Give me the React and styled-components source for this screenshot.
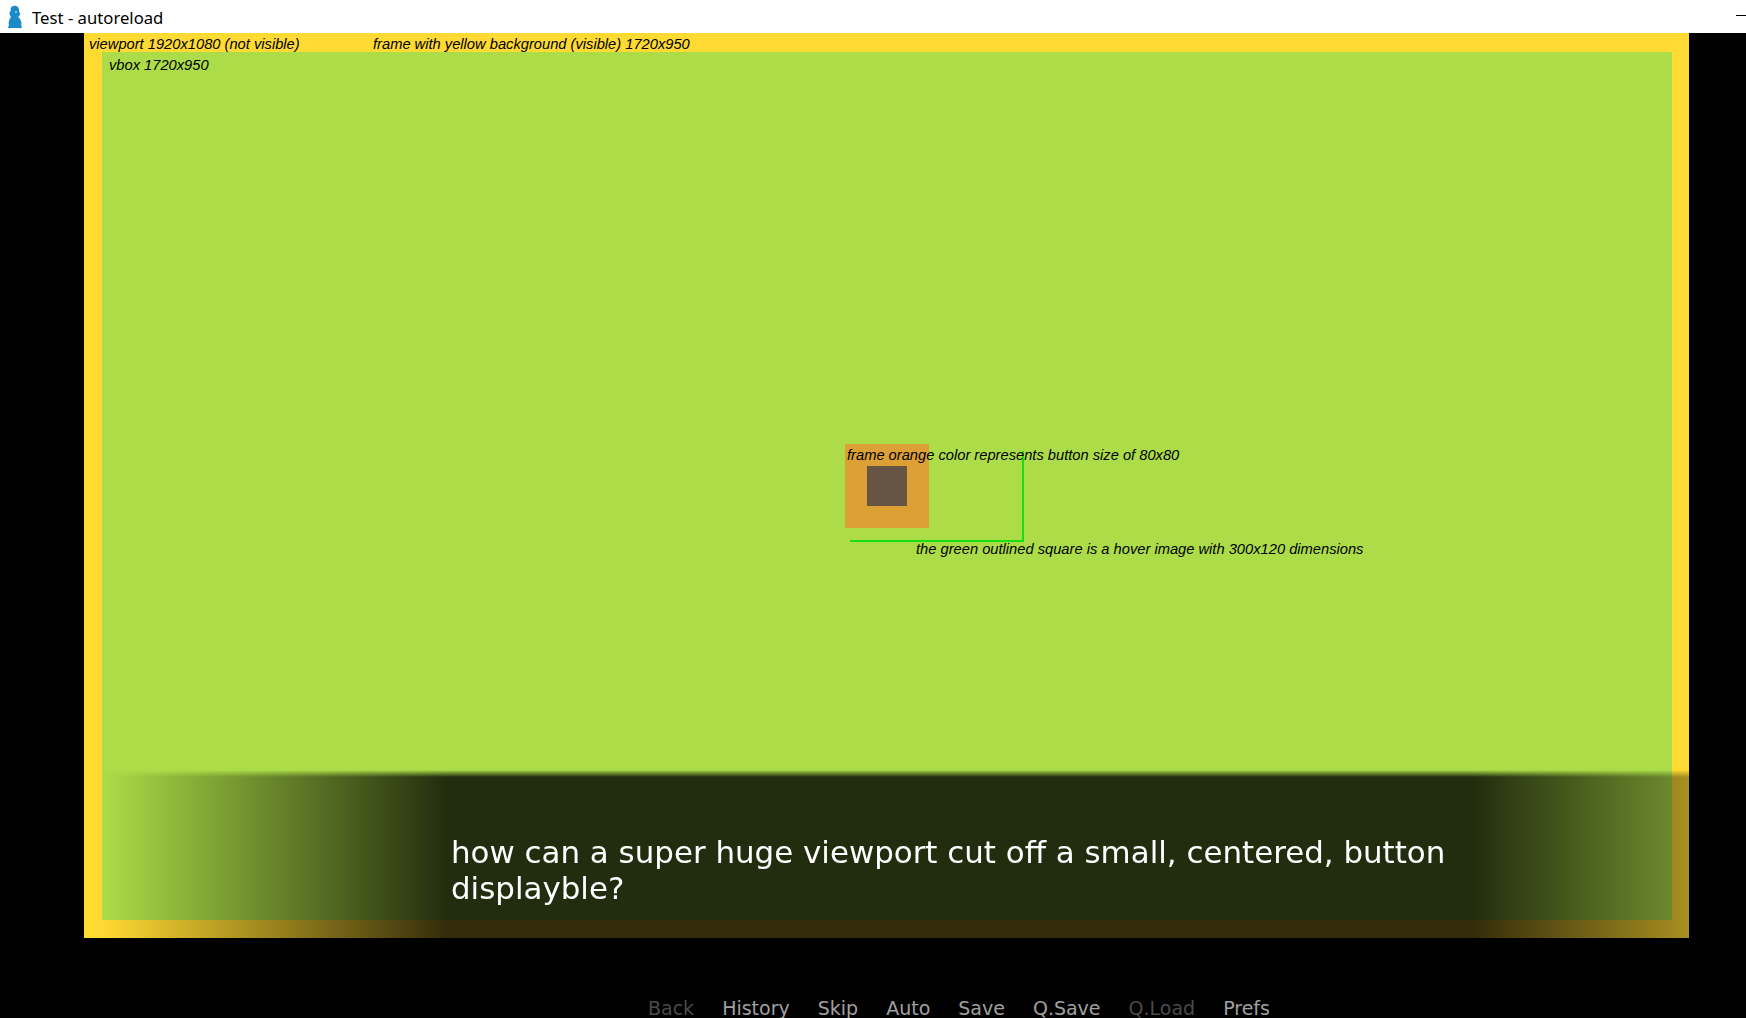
import styled, { createGlobalStyle } from "styled-components";

const GlobalStyle = createGlobalStyle`
	html, body {
		margin: 0;
		padding: 0;
		background: #000;
		overflow: hidden;
	}
`;

const Window = styled.div`
	width: 1746px;
	height: 1018px;
	display: flex;
	flex-direction: column;
	overflow: hidden;
	background: #000;
`;

const TitleBar = styled.header`
	height: 33px;
	flex: none;
	display: flex;
	align-items: center;
	gap: 8px;
	padding: 0 0 0 6px;
	background: #fff;
	color: #000;
	font-family: "Segoe UI", "Noto Sans", sans-serif;
	font-size: 16.7px;
`;

const TitleText = styled.span`
	flex: 1;
	line-height: 1;
	padding-top: 3px;
`;

const Minimize = styled.span`
	width: 10px;
	height: 1px;
	margin-bottom: 2px;
	background: #000;
	align-self: center;
`;

const Screen = styled.main`
	position: relative;
	flex: 1;
	display: flex;
	flex-direction: column;
	align-items: flex-start;
`;

// жёлтая рамка вокруг vbox
const Frame = styled.section`
	margin-left: 84px;
	width: 1605px;
	height: 905px;
	box-sizing: border-box;
	padding: 19px 17px 18px 18px;
	background: #ffda33;
	position: relative;
`;

const Label = styled.span`
	position: absolute;
	left: ${(p) => p.$x}px;
	top: ${(p) => p.$y}px;
	font-family: "Liberation Sans", Arial, sans-serif;
	font-style: italic;
	font-size: 14.7px;
	line-height: 16px;
	color: #000;
	white-space: nowrap;
`;

const VBox = styled.div`
	position: relative;
	width: 100%;
	height: 100%;
	background: #acdd48;
`;

const Button = styled.div`
	position: absolute;
	left: 743px;
	top: 392px;
	width: 84px;
	height: 84px;
	background: #dca034;
	display: flex;
	align-items: center;
	justify-content: center;
`;

const ButtonIdle = styled.div`
	width: 40px;
	height: 40px;
	background: #665544;
`;

const HoverOutline = styled.div`
	position: absolute;
	left: 748px;
	top: 399px;
	width: 172px;
	height: 89px;
	border-right: 2px solid #14e014;
	border-bottom: 2px solid #14e014;
`;

const TextBox = styled.div`
	position: absolute;
	left: 102px;
	top: 737px;
	width: 1749px;
	height: 168px;
	box-sizing: border-box;
	padding: 65px 0 0 349px;
	background: linear-gradient(
		to right,
		rgba(0, 0, 0, 0) 0%,
		rgba(0, 0, 0, 0.8) 19.8%,
		rgba(0, 0, 0, 0.8) 78.3%,
		rgba(0, 0, 0, 0) 100%
	);
	-webkit-mask-image: linear-gradient(to bottom, transparent 0, #000 7px);
	mask-image: linear-gradient(to bottom, transparent 0, #000 7px);
`;

const Dialogue = styled.p`
	margin: 0;
	max-width: 1017px;
	font-family: "DejaVu Sans", sans-serif;
	font-size: 30.9px;
	line-height: 35.6px;
	color: #fff;
`;

const QuickMenu = styled.nav`
	margin: 59px 0 0 634px;
	display: flex;
`;

const QuickButton = styled.span`
	padding: 0 14px;
	font-family: "DejaVu Sans", sans-serif;
	font-size: 19px;
	line-height: 22px;
	color: ${(p) => (p.$disabled ? "#4a4a4a" : "#a0a0a0")};
`;

const RenpyIcon = () => (
	<svg width="18" height="24" viewBox="0 0 18 24">
		<path
			d="M7 1 C11 0 14 3 13 7 C15 8 14 11 12 12 C15 14 16 18 15 21 C17 22 16 24 13 23 L5 23 C2 24 1 22 3 21 C2 18 3 14 5 12 C3 10 3 7 5 5 C4 3 5 2 7 1 Z"
			fill="#1a8bc6"
		/>
		<circle cx="10" cy="7" r="1" fill="#9fd6f0" />
	</svg>
);

const quick = [
	{ name: "Back", disabled: true },
	{ name: "History" },
	{ name: "Skip" },
	{ name: "Auto" },
	{ name: "Save" },
	{ name: "Q.Save" },
	{ name: "Q.Load", disabled: true },
	{ name: "Prefs" },
];

export default function App() {
	return (
		<>
			<GlobalStyle />
			<Window>
				<TitleBar>
					<RenpyIcon />
					<TitleText>Test - autoreload</TitleText>
					<Minimize />
				</TitleBar>
				<Screen>
					<Frame>
						<Label $x={5} $y={3}>viewport 1920x1080 (not visible)</Label>
						<Label $x={289} $y={3}>frame with yellow background (visible) 1720x950</Label>
						<VBox>
							<Label $x={7} $y={5}>vbox 1720x950</Label>
							<Button>
								<ButtonIdle />
							</Button>
							<HoverOutline />
							<Label $x={745} $y={395}>frame orange color represents button size of 80x80</Label>
							<Label $x={814} $y={489}>the green outlined square is a hover image with 300x120 dimensions</Label>
						</VBox>
					</Frame>
					<TextBox>
						<Dialogue>
							how can a super huge viewport cut off a small, centered, button displayble?
						</Dialogue>
					</TextBox>
					<QuickMenu>
						{quick.map((b) => (
							<QuickButton key={b.name} $disabled={b.disabled}>
								{b.name}
							</QuickButton>
						))}
					</QuickMenu>
				</Screen>
			</Window>
		</>
	);
}
